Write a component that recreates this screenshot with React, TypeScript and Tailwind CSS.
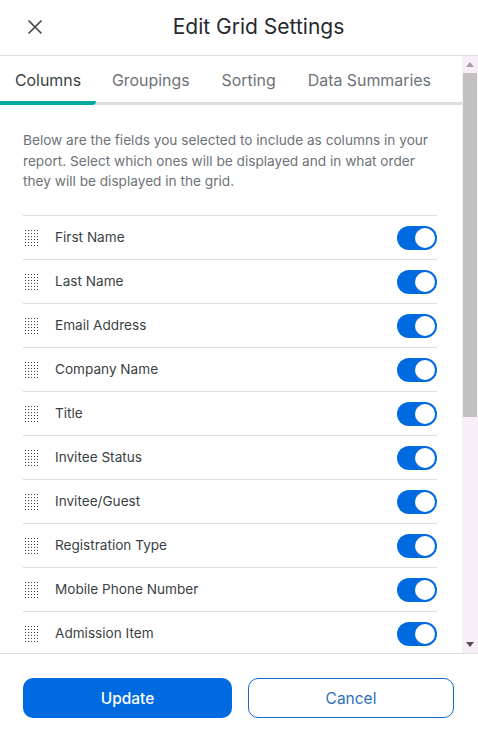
import React from "react";
import { X } from "lucide-react";

const fields = [
  "First Name",
  "Last Name",
  "Email Address",
  "Company Name",
  "Title",
  "Invitee Status",
  "Invitee/Guest",
  "Registration Type",
  "Mobile Phone Number",
  "Admission Item",
];

const tabs = ["Groupings", "Sorting", "Data Summaries"];

const GripIcon = () => (
  <svg width="13" height="16" viewBox="0 0 13 16" className="ml-0.5 mt-0.5 shrink-0 text-[#3f4349]" fill="currentColor">
    {[0, 3, 6, 9, 12].map((x) =>
      [0, 3, 6, 9, 12, 15].map((y) => <rect key={`${x}-${y}`} x={x} y={y} width="1" height="1" />)
    )}
  </svg>
);

const Toggle = () => (
  <div className="flex h-6 w-10 items-center justify-end rounded-full bg-[#006ae1] pr-0.5">
    <div className="h-5 w-5 rounded-full bg-white" />
  </div>
);

export default function App() {
  return (
    <div className="flex h-[732px] w-[478px] flex-col overflow-hidden bg-white font-['Inter','Roboto',sans-serif]">
      {/* Header */}
      <div className="relative flex h-14 shrink-0 items-center justify-center border-b border-[#dddddd] pb-0.5 pl-[39px]">
        <button className="absolute left-[23px] top-[15px] text-[#45484d]" aria-label="Close">
          <X size={24} strokeWidth={1.75} />
        </button>
        <h1 className="text-[21px] font-normal text-[#26292e]">Edit Grid Settings</h1>
      </div>

      <div className="flex min-h-0 flex-1 border-b border-[#dddddd]">
        <div className="min-w-0 flex-1 overflow-hidden">
          {/* Tabs */}
          <div className="flex h-[49px] border-b-[3px] border-[#dedede] pt-1 text-[15.9px]">
            <div className="-mb-[3px] flex w-24 items-center justify-center rounded-r-sm border-b-4 border-[#00ab9f] text-[#3a3f45]">
              Columns
            </div>
            {tabs.map((tab, i) => (
              <div key={tab} className={`flex items-center text-[#6e7278] ${i === 0 ? "pl-4" : "pl-8"}`}>
                {tab}
              </div>
            ))}
          </div>

          {/* Body */}
          <div className="px-[23px] pt-[25px]">
            <p className="w-[420px] text-[13.65px] leading-[20.5px] text-[#6e7278]">
              Below are the fields you selected to include as columns in your report. Select which ones will be
              displayed and in what order they will be displayed in the grid.
            </p>
            <div className="mt-[23px] w-[414px] border-t border-[#dddddd]">
              {fields.map((field) => (
                <div key={field} className="flex h-11 items-center border-b border-[#dddddd]">
                  <GripIcon />
                  <span className="ml-[17px] text-[13.6px] text-[#3a3f45]">{field}</span>
                  <div className="ml-auto pt-0.5">
                    <Toggle />
                  </div>
                </div>
              ))}
            </div>
          </div>
        </div>

        {/* Scrollbar */}
        <div className="flex w-4 shrink-0 flex-col items-center bg-[#f8eef8]">
          <div className="flex h-[17px] items-center justify-center">
            <div className="h-0 w-0 border-x-4 border-b-[5px] border-x-transparent border-b-[#a3a3a3]" />
          </div>
          <div className="h-[344px] w-[14px] bg-[#c1c1c1]" />
          <div className="mt-auto flex h-[17px] items-center justify-center">
            <div className="h-0 w-0 border-x-4 border-t-[5px] border-x-transparent border-t-[#505050]" />
          </div>
        </div>
      </div>

      {/* Footer */}
      <div className="flex h-[78px] shrink-0 gap-4 pl-[23px] pr-6 pt-6">
        <button className="h-10 w-[209px] rounded-[10px] bg-[#006ae1] pt-0.5 text-[15.5px] font-medium text-white">
          Update
        </button>
        <button className="h-10 w-[206px] rounded-[10px] border border-[#1a6bc4] bg-white pt-0.5 text-[15.5px] text-[#2a6fc0]">
          Cancel
        </button>
      </div>
    </div>
  );
}
